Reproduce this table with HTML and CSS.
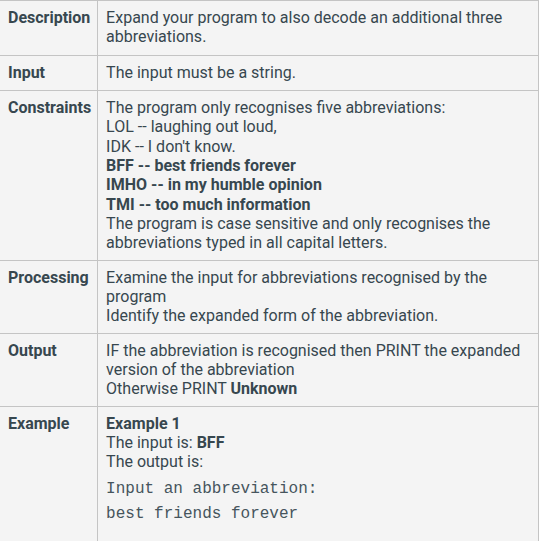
FILE: index.html
```html
<!DOCTYPE html>
<html lang="en">
<head>
<meta charset="utf-8">
<title>Abbreviations task</title>
<link rel="stylesheet" href="styles.css">
</head>
<body>
<table class="spec">
  <tbody>
    <tr class="row-desc">
      <th>Description</th>
      <td>Expand your program to also decode an additional three abbreviations.</td>
    </tr>
    <tr class="row-input">
      <th>Input</th>
      <td>The input must be a string.</td>
    </tr>
    <tr>
      <th>Constraints</th>
      <td>
        <div>The program only recognises five abbreviations:</div>
        <div>LOL -- laughing out loud,</div>
        <div>IDK -- I don't know.</div>
        <div class="b">BFF -- best friends forever</div>
        <div class="b">IMHO -- in my humble opinion</div>
        <div class="b">TMI -- too much information</div>
        <div>The program is case sensitive and only recognises the abbreviations typed in all capital letters.</div>
      </td>
    </tr>
    <tr>
      <th>Processing</th>
      <td>
        <div>Examine the input for abbreviations recognised by the program</div>
        <div>Identify the expanded form of the abbreviation.</div>
      </td>
    </tr>
    <tr>
      <th>Output</th>
      <td>
        <div>IF the abbreviation is recognised then PRINT the expanded version of the abbreviation</div>
        <div>Otherwise PRINT <b>Unknown</b></div>
      </td>
    </tr>
    <tr>
      <th>Example</th>
      <td>
        <div class="b">Example 1</div>
        <div>The input is: <b>BFF</b></div>
        <div>The output is:</div>
        <div class="output">
          <div class="code">Input an abbreviation:</div>
          <div class="code">best friends forever</div>
        </div>
      </td>
    </tr>
  </tbody>
</table>
</body>
</html>
```
FILE: styles.css
```css
html, body {
  margin: 0;
  padding: 0;
  background: #ffffff;
}
body {
  font-family: Roboto, "Liberation Sans", sans-serif;
  font-size: 16px;
  line-height: 19.35px;
  color: #37474f;
}
.spec {
  border-collapse: collapse;
  width: 540px;
  margin-left: -1px;
  background: #f4f4f4;
}
.spec th,
.spec td {
  border: 1px solid #c4c4c4;
  padding: 7px 8px;
  vertical-align: top;
  text-align: left;
}
.spec th {
  font-weight: 700;
  white-space: nowrap;
  width: 1px;
  padding-right: 6px;
}
.row-desc th,
.row-desc td {
  padding-bottom: 8.3px;
}
.row-input th,
.row-input td {
  padding-bottom: 7.65px;
}
.b, b {
  font-weight: 700;
}
.output {
  margin-top: 5.5px;
  margin-bottom: 16px;
}
.code {
  font-family: "Liberation Mono", "Courier New", monospace;
  font-size: 16px;
  line-height: 25px;
  color: #46555d;
}
```
